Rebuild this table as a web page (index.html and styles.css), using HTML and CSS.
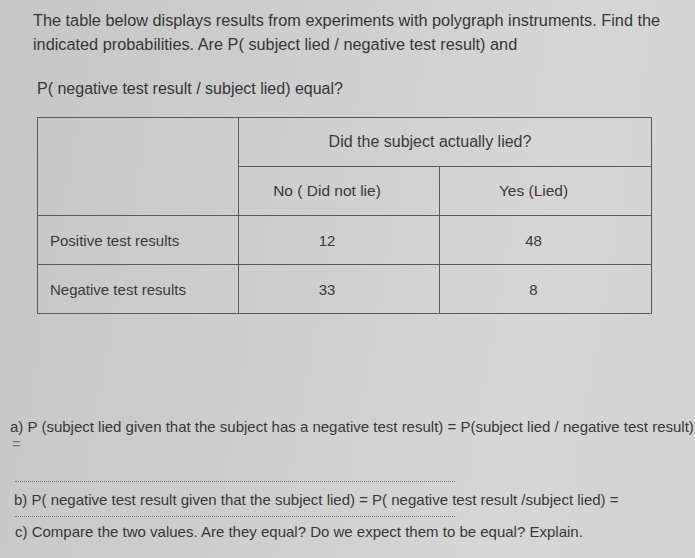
FILE: index.html
```html
<!DOCTYPE html>
<html>
<head>
<meta charset="utf-8">
<link rel="stylesheet" href="styles.css">
</head>
<body>
<div class="page">
  <p class="intro">The table below displays results from experiments with polygraph instruments. Find the indicated probabilities. Are P( subject lied / negative test result) and</p>
  <p class="intro2">P( negative test result / subject lied) equal?</p>
  <table class="data">
    <tr>
      <td class="blank" rowspan="2"></td>
      <td class="head" colspan="2">Did the subject actually lied?</td>
    </tr>
    <tr>
      <td class="sub col2">No ( Did not lie)</td>
      <td class="sub col3">Yes (Lied)</td>
    </tr>
    <tr>
      <td class="label">Positive test results</td>
      <td class="num">12</td>
      <td class="num">48</td>
    </tr>
    <tr>
      <td class="label">Negative test results</td>
      <td class="num">33</td>
      <td class="num">8</td>
    </tr>
  </table>
  <div class="questions">
    <p class="qa">a) P (subject lied given that the subject has a negative test result) = P(subject lied / negative test result)</p>
    <p class="eq">=</p>
    <div class="dots first"></div>
    <p class="qb">b) P( negative test result given that the subject lied) = P( negative test result /subject lied) =</p>
    <div class="dots second"></div>
    <p class="qc">c) Compare the two values. Are they equal? Do we expect them to be equal? Explain.</p>
  </div>
</div>
</body>
</html>
```

FILE: styles.css
```css
html, body {
  margin: 0;
  padding: 0;
}
body {
  width: 695px;
  height: 558px;
  overflow: hidden;
  background: linear-gradient(100deg, #c6c6c6 0%, #cfcfcf 45%, #d6d6d6 75%, #d2d2d2 100%);
  font-family: "Liberation Sans", Arial, sans-serif;
  color: #363636;
}
.page {
  padding: 8px 0 0 0;
}
p {
  margin: 0;
}
.intro {
  margin-left: 33px;
  width: 650px;
  font-size: 16.3px;
  line-height: 24px;
}
.intro2 {
  margin: 21px 0 0 37px;
  font-size: 16px;
  line-height: 24px;
}
.data {
  margin: 16px 0 0 37px;
  border-collapse: collapse;
  font-size: 15px;
  color: #3a3a3a;
}
.data td {
  border: 1.5px solid #5a5a5a;
  height: 48px;
  padding: 0;
}
.blank { width: 200px; }
.head {
  text-align: center;
  font-size: 16px;
  padding-right: 30px !important;
}
.sub {
  text-align: center;
  font-size: 15.5px;
  padding-right: 24px !important;
}
.col2 { width: 176px; }
.col3 { width: 187px; }
.label {
  padding-left: 12px !important;
}
.num {
  text-align: center;
  padding-right: 24px !important;
}
.questions {
  margin-top: 103px;
  font-size: 15px;
  color: #383838;
}
.qa {
  margin-left: 10px;
  white-space: nowrap;
  line-height: 20px;
}
.eq {
  margin-left: 12px;
  line-height: 14px;
  color: #777;
}
.dots {
  margin-left: 15px;
  width: 440px;
  border-top: 1px dotted #7a7a7a;
}
.dots.first {
  margin-top: 30px;
}
.qb {
  margin: 8px 0 0 14px;
  line-height: 20px;
}
.dots.second {
  margin-top: 6px;
}
.qc {
  margin: 5px 0 0 15px;
  line-height: 20px;
}
```
